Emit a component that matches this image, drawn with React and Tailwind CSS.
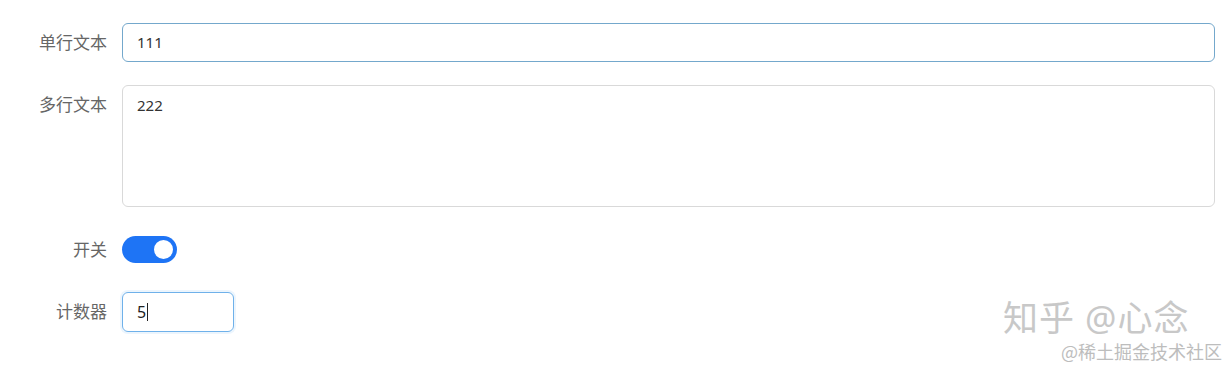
export default function App() {
  const font = { fontFamily: '"Noto Sans", "Noto Sans CJK SC", sans-serif' };
  return (
    <div className="relative h-[368px] w-[1227px] bg-white" style={font}>
      <div className="flex flex-col pt-[23px] pr-[12px]">
        <div className="flex items-center">
          <label className="w-[108px] pr-[1px] text-right text-[17px] text-[#666]">单行文本</label>
          <div className="ml-[14px] flex h-[39px] flex-1 items-center rounded-[6px] border border-[#74a8cc] px-[14px] text-[15px] text-[#333]">111</div>
        </div>
        <div className="mt-[23px] flex items-start">
          <label className="w-[108px] pt-[7px] pr-[1px] text-right text-[17px] text-[#666]">多行文本</label>
          <div className="ml-[14px] h-[122px] flex-1 rounded-[6px] border border-[#d9d9d9] px-[14px] pt-[8px] text-[15px] text-[#333]">222</div>
        </div>
        <div className="mt-[29px] flex items-center">
          <label className="w-[108px] pr-[1px] text-right text-[17px] text-[#666]">开关</label>
          <div className="ml-[14px] flex h-[27px] w-[55px] items-center justify-end rounded-full bg-[#1e74f5] pr-[2px]">
            <div className="h-[23px] w-[23px] rounded-full border-[2px] border-[#1e74f5] bg-white"></div>
          </div>
        </div>
        <div className="mt-[29px] flex items-center">
          <label className="w-[108px] pr-[1px] text-right text-[17px] text-[#666]">计数器</label>
          <div className="ml-[14px] flex h-[40px] w-[112px] items-center rounded-[6px] border border-[#6fb1ea] px-[14px] text-[16px] text-[#222] shadow-[0_0_0_2px_rgba(100,170,240,0.12)]">
            5<span className="ml-[1px] inline-block h-[18px] w-[1px] bg-[#222]"></span>
          </div>
        </div>
      </div>
      <div className="absolute left-[1003px] top-[296px] text-[35px] leading-[44px] text-[#c8c8c8] tracking-[1px]">知乎 @心念</div>
      <div className="absolute left-[1061px] top-[339px] text-[18px] leading-[24px] text-[#bdbdbd]" style={{ fontFamily: '"Noto Sans CJK SC", serif' }}>@稀土掘金技术社区</div>
    </div>
  );
}
